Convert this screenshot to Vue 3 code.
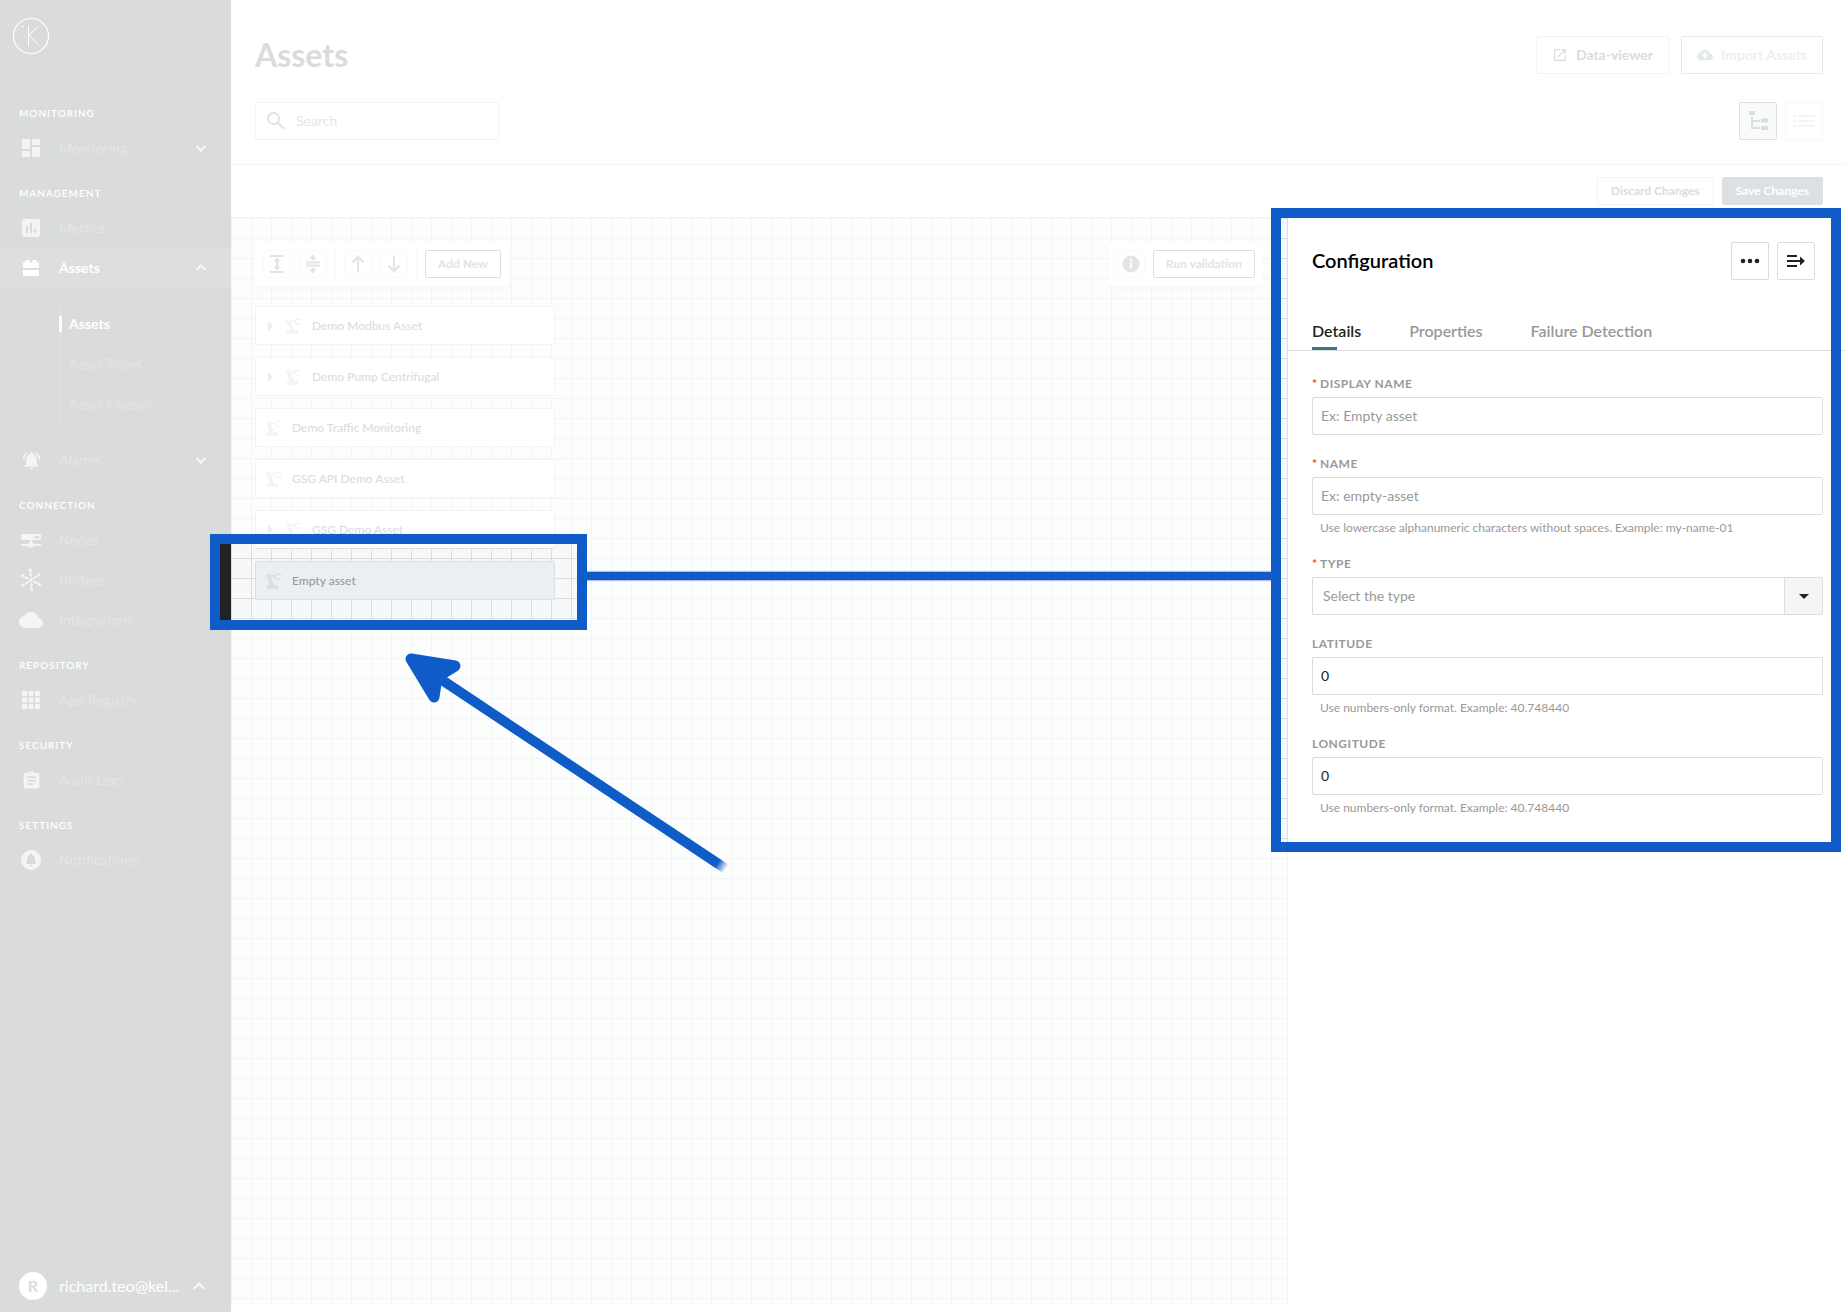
<script setup>
import { ref } from 'vue'

const icons = {
  dashboard: 'M3 13h8V3H3v10zm0 8h8v-6H3v6zm10 0h8V11h-8v10zm0-18v6h8V3h-8z',
  metrics:
    'M19 3H5c-1.1 0-2 .9-2 2v14c0 1.1.9 2 2 2h14c1.1 0 2-.9 2-2V5c0-1.1-.9-2-2-2zM9 17H7v-7h2v7zm4 0h-2V7h2v10zm4 0h-2v-4h2v4z',
  brick: 'M4 12V6.500h2.500V4h4v2.500h3V4h4v2.500H20V12zM4 14h16v5q0 1-1 1H5q-1 0-1-1z',
  alarm:
    'M7.58 4.08L6.15 2.65C3.75 4.48 2.17 7.3 2.03 10.5h2c.15-2.65 1.51-4.97 3.55-6.42zm12.39 6.42h2c-.15-3.2-1.73-6.02-4.12-7.85l-1.42 1.43c2.02 1.45 3.39 3.77 3.54 6.42zM18 11c0-3.07-1.64-5.64-4.5-6.32V4c0-.83-.67-1.5-1.5-1.5s-1.5.67-1.5 1.5v.68C7.63 5.36 6 7.92 6 11v5l-2 2v1h16v-1l-2-2v-5zm-6 11c.14 0 .27-.01.4-.04.65-.14 1.18-.58 1.44-1.18.1-.24.15-.5.15-.78h-4c.01 1.1.9 2 2.01 2z',
  nodes:
    'M3 6h18q1 0 1 1v4q0 1-1 1h-8v2.300q1.500 .4 2 1.700h7v2h-7q-1 1.500-3 1.500T9 18H2v-2h7q.5-1.300 2-1.700V12H3q-1 0-1-1V7q0-1 1-1zM16 8v2.500h4V8z',
  cloud:
    'M19.35 10.04C18.67 6.59 15.64 4 12 4 9.11 4 6.6 5.64 5.35 8.04 2.34 8.36 0 10.91 0 14c0 3.31 2.69 6 6 6h13c2.76 0 5-2.24 5-5 0-2.64-2.05-4.78-4.65-4.96z',
  clipboard:
    'M19 3h-4.18C14.4 1.84 13.3 1 12 1c-1.3 0-2.4.84-2.82 2H5c-1.1 0-2 .9-2 2v14c0 1.1.9 2 2 2h14c1.1 0 2-.9 2-2V5c0-1.1-.9-2-2-2zm-7 0c.55 0 1 .45 1 1s-.45 1-1 1-1-.45-1-1 .45-1 1-1zm2 14H7v-2h7v2zm3-4H7v-2h10v2zm0-4H7V7h10v2z',
  bell:
    'M12 2a10 10 0 1 0 0 20 10 10 0 0 0 0-20zm0 16.5c-.83 0-1.500-.67-1.500-1.500h3c0 .83-.67 1.500-1.500 1.500zm5-2.500H7v-1l1-1v-2.610C8 9.270 9.030 7.470 11 7v-.5c0-.57.43-1 1-1s1 .43 1 1V7c1.970.47 3 2.280 3 4.390V14l1 1v1z',
}

const sections = [
  { title: 'Monitoring', items: [{ label: 'Monitoring', icon: 'dashboard', chevron: 'down' }] },
  {
    title: 'Management',
    items: [
      { label: 'Metrics', icon: 'metrics' },
      {
        label: 'Assets',
        icon: 'brick',
        chevron: 'up',
        active: true,
        children: ['Assets', 'Asset Types', 'Asset Classes'],
      },
      { label: 'Alarms', icon: 'alarm', chevron: 'down', small: true },
    ],
  },
  {
    title: 'Connection',
    items: [
      { label: 'Nodes', icon: 'nodes' },
      { label: 'Bridges', icon: 'bridges' },
      { label: 'Integrations', icon: 'cloud' },
    ],
  },
  { title: 'Repository', items: [{ label: 'App Registry', icon: 'apps' }] },
  { title: 'Security', items: [{ label: 'Audit Logs', icon: 'clipboard', small: true }] },
  { title: 'Settings', items: [{ label: 'Notifications', icon: 'bell' }] },
]

const assets = [
  { name: 'Demo Modbus Asset', parent: true },
  { name: 'Demo Pump Centrifugal', parent: true },
  { name: 'Demo Traffic Monitoring' },
  { name: 'GSG API Demo Asset' },
  { name: 'GSG Demo Asset', parent: true, edge: true },
  { name: 'Empty asset', selected: true },
]

const search = ref('')
const displayName = ref('')
const assetName = ref('')
const type = ref('')
const latitude = ref('0')
const longitude = ref('0')
</script>

<template>
  <div class="app">
    <aside class="sidebar">
      <a class="logo" href="#" aria-label="Home">
        <svg width="38" height="38" viewBox="0 0 38 38" fill="none" stroke="#fff">
          <circle cx="19" cy="19" r="17.5" stroke-width="1.2" />
          <path d="M16.500 9.500v19M26.500 9.500L17 18l10 10.500" stroke-width="1" />
          <circle cx="10.500" cy="9.500" r="1" fill="#fff" stroke="none" />
        </svg>
      </a>
      <nav>
        <section v-for="s in sections" :key="s.title">
          <h2 class="nav-title">{{ s.title }}</h2>
          <template v-for="item in s.items" :key="item.label">
            <a href="#" class="nav-item" :class="{ active: item.active }">
              <span class="nav-icon">
                <svg v-if="item.icon === 'apps'" width="24" height="24" viewBox="0 0 24 24">
                  <template v-for="r in 3" :key="r">
                    <rect v-for="c in 3" :key="c" :x="c * 6.5 - 3.5" :y="r * 6.5 - 3.5" width="5" height="5" rx="1" />
                  </template>
                </svg>
                <svg v-else-if="item.icon === 'bridges'" width="24" height="24" viewBox="0 0 24 24">
                  <g v-for="n in 6" :key="n" :transform="`rotate(${n * 60 - 4} 12 12)`">
                    <path d="M11.500 4h1v8h-1z" />
                    <circle cx="12" cy="2.500" r="1.700" />
                    <circle cx="12" cy="6.800" r="1.400" />
                  </g>
                </svg>
                <svg v-else :width="item.small ? 21 : 24" :height="item.small ? 21 : 24" viewBox="0 0 24 24">
                  <path :d="icons[item.icon]" fill-rule="evenodd" />
                </svg>
              </span>
              <span class="nav-label">{{ item.label }}</span>
              <svg v-if="item.chevron" class="chevron" width="12" height="12" viewBox="0 0 12 12">
                <path :d="item.chevron === 'up' ? 'M1.500 8L6 3.500 10.500 8' : 'M1.500 4L6 8.500 10.500 4'" />
              </svg>
            </a>
            <ul v-if="item.children" class="submenu">
              <li v-for="(c, i) in item.children" :key="c">
                <a href="#" class="sub-item" :class="{ current: i === 0 }">{{ c }}</a>
              </li>
            </ul>
          </template>
        </section>
      </nav>
      <button class="user" type="button">
        <span class="avatar">R</span>
        <span class="user-name">richard.teo@kel...</span>
        <svg class="chevron" width="14" height="12" viewBox="0 0 14 12"><path d="M1.500 9L7 3.500 12.500 9" /></svg>
      </button>
    </aside>

    <main class="main">
      <header class="header">
        <div class="bar title-bar">
          <h1>Assets</h1>
          <div class="group">
            <button class="btn large" type="button">
              <svg width="16" height="16" viewBox="0 0 24 24" fill="#dcdcdc">
                <path d="M19 19H5V5h7V3H5a2 2 0 0 0-2 2v14a2 2 0 0 0 2 2h14c1.100 0 2-.9 2-2v-7h-2v7zM14 3v2h3.590l-9.830 9.830 1.410 1.410L19 6.410V10h2V3h-7z" />
              </svg>
              Data-viewer
            </button>
            <button class="btn large import" type="button">
              <svg width="16" height="16" viewBox="0 0 24 24" fill="#e1ebeb">
                <path d="M19.350 10.040C18.670 6.590 15.640 4 12 4 9.110 4 6.600 5.640 5.350 8.040 2.340 8.360 0 10.910 0 14c0 3.310 2.690 6 6 6h13c2.760 0 5-2.240 5-5 0-2.640-2.050-4.780-4.650-4.960zM14 13v4h-4v-4H7l5-5 5 5h-3z" />
              </svg>
              Import Assets
            </button>
          </div>
        </div>
        <div class="bar">
          <label class="search">
            <svg width="24" height="24" viewBox="0 0 24 24" fill="#e3e3e3">
              <path d="M15.500 14h-.79l-.28-.27A6.470 6.470 0 0 0 16 9.500 6.500 6.500 0 1 0 9.500 16c1.610 0 3.090-.59 4.230-1.570l.27.28v.79l5 4.990L20.490 19l-4.990-5zm-6 0C7.010 14 5 11.990 5 9.500S7.010 5 9.500 5 14 7.010 14 9.500 11.990 14 9.500 14z" />
            </svg>
            <input v-model="search" type="text" placeholder="Search" aria-label="Search" />
          </label>
          <div class="group toggles">
            <button class="square on" type="button" aria-label="Tree view">
              <svg width="24" height="24" viewBox="0 0 24 24" fill="#d8dfe1">
                <path d="M3 2h6v4H3zM15 9.500h7v4h-7zM15 17h7v4h-7zM5 7.500h2V11h7v2H7v5h7v2H5z" />
              </svg>
            </button>
            <button class="square" type="button" aria-label="List view">
              <svg width="22" height="14" viewBox="0 0 22 14" fill="#f4f4f4">
                <path d="M0 1h3v2H0zM5 1h17v2H5zM0 6h3v2H0zM5 6h17v2H5zM0 11h3v2H0zM5 11h17v2H5z" />
              </svg>
            </button>
          </div>
        </div>
      </header>

      <div class="actions">
        <button class="btn discard" type="button">Discard Changes</button>
        <button class="btn save" type="button">Save Changes</button>
      </div>

      <div class="workspace">
        <div class="canvas">
          <div class="lit lit-row"></div>
          <div class="lit lit-edge"></div>
          <div class="toolbars">
            <div class="toolbar">
              <button class="tool" type="button" aria-label="Expand all">
                <svg width="16" height="18" viewBox="0 0 16 18"><path d="M1 1h14M1 17h14M8 4v10M5.500 6.500L8 4l2.500 2.500M5.500 11.500L8 14l2.500-2.500" /></svg>
              </button>
              <button class="tool" type="button" aria-label="Collapse all">
                <svg width="16" height="18" viewBox="0 0 16 18"><path d="M1 7.500h14M1 10.500h14M8 0v4M5.500 2L8 4.500 10.500 2M8 18v-4M5.500 16L8 13.500l2.500 2.500" /></svg>
              </button>
              <span class="divider"></span>
              <button class="tool" type="button" aria-label="Move up">
                <svg width="16" height="18" viewBox="0 0 16 18"><path d="M8 17V2M2.500 7.500L8 2l5.500 5.500" /></svg>
              </button>
              <button class="tool" type="button" aria-label="Move down">
                <svg width="16" height="18" viewBox="0 0 16 18"><path d="M8 1v15M2.500 10.500L8 16l5.500-5.500" /></svg>
              </button>
              <span class="divider"></span>
              <button class="btn outline" type="button">Add New</button>
            </div>
            <div class="toolbar">
              <button class="tool" type="button" aria-label="Information">
                <svg class="solid" width="18" height="18" viewBox="0 0 18 18">
                  <path fill-rule="evenodd" d="M9 .5a8.500 8.500 0 1 0 0 17 8.500 8.500 0 0 0 0-17zM8 4h2v2H8zM8 7.500h2V13H8z" />
                </svg>
              </button>
              <button class="btn outline" type="button">Run validation</button>
            </div>
          </div>
          <ul class="tree">
            <li v-for="a in assets" :key="a.name" class="asset" :class="{ selected: a.selected, edge: a.edge }">
              <svg v-if="a.parent" class="caret" width="5" height="10" viewBox="0 0 5 10"><path d="M0 0l5 5-5 5z" /></svg>
              <svg class="robot" width="16" height="16" viewBox="0 0 16 16">
                <path d="M1.400 4.600L4.800 3.800 8.300 12.300h3q.7 0 .7 1v2.400H.7v-2.400q0-1 1-1H3.600z" />
                <path class="line" d="M4 3h4.500M15.200 2L11.800 1 8.700 2.700v2.200l3.100 1.800L15.200 5.600" />
                <circle class="line" cx="2.400" cy="3" r="1.600" />
              </svg>
              <span>{{ a.name }}</span>
            </li>
          </ul>
        </div>

        <section class="panel">
          <div class="panel-head">
            <h2>Configuration</h2>
            <div class="group">
              <button class="square dark" type="button" aria-label="More options">
                <svg width="20" height="6" viewBox="0 0 20 6"><circle cx="3" cy="3" r="2.300" /><circle cx="10" cy="3" r="2.300" /><circle cx="17" cy="3" r="2.300" /></svg>
              </button>
              <button class="square dark" type="button" aria-label="Collapse panel">
                <svg width="18" height="14" viewBox="0 0 18 14"><path d="M0 1h10v2H0zM0 6h13V2.500L18 7l-5 4.500V8H0zM0 11h10v2H0z" /></svg>
              </button>
            </div>
          </div>
          <div class="tabs" role="tablist">
            <button class="tab current" type="button" role="tab">Details</button>
            <button class="tab" type="button" role="tab">Properties</button>
            <button class="tab" type="button" role="tab">Failure Detection</button>
          </div>
          <form class="form">
            <div class="field">
              <label for="display-name"><b>*</b>Display name</label>
              <input id="display-name" v-model="displayName" type="text" placeholder="Ex: Empty asset" />
            </div>
            <div class="field">
              <label for="name"><b>*</b>Name</label>
              <input id="name" v-model="assetName" type="text" placeholder="Ex: empty-asset" />
              <p>Use lowercase alphanumeric characters without spaces. Example: my-name-01</p>
            </div>
            <div class="field">
              <label for="type"><b>*</b>Type</label>
              <div class="select">
                <select id="type" v-model="type">
                  <option value="">Select the type</option>
                </select>
                <span class="select-arrow">
                  <svg width="10" height="5" viewBox="0 0 10 5"><path d="M0 0h10L5 5z" /></svg>
                </span>
              </div>
            </div>
            <div class="field">
              <label for="latitude">Latitude</label>
              <input id="latitude" v-model="latitude" type="text" />
              <p>Use numbers-only format. Example: 40.748440</p>
            </div>
            <div class="field">
              <label for="longitude">Longitude</label>
              <input id="longitude" v-model="longitude" type="text" />
              <p>Use numbers-only format. Example: 40.748440</p>
            </div>
          </form>
        </section>

        <div class="connector"></div>
        <div class="frame frame-row"></div>
        <div class="frame frame-panel"></div>
        <svg class="pointer" width="330" height="230" viewBox="400 648 330 230">
          <defs>
            <linearGradient id="tail" gradientUnits="userSpaceOnUse" x1="436" y1="676" x2="726" y2="869">
              <stop offset=".97" stop-color="#0f5bc8" />
              <stop offset="1" stop-color="#0f5bc8" stop-opacity="0" />
            </linearGradient>
          </defs>
          <path d="M411 659l44 7-18 11-3 20z" fill="#0f5bc8" stroke="#0f5bc8" stroke-width="11" stroke-linejoin="round" />
          <path d="M436 676L726 869" stroke="url(#tail)" stroke-width="10" />
        </svg>
      </div>
    </main>
  </div>
</template>

<style>
body {
  margin: 0;
  background: #fff;
}
</style>

<style scoped>
* {
  box-sizing: border-box;
}
.app {
  display: flex;
  min-height: 100vh;
  font: 14px/20px Lato, 'Liberation Sans', sans-serif;
  color: #212322;
}
h1,
h2,
p,
ul {
  margin: 0;
  padding: 0;
  list-style: none;
}
a {
  text-decoration: none;
}
button,
input,
select {
  font: inherit;
  color: inherit;
}
button {
  display: flex;
  align-items: center;
  justify-content: center;
  padding: 0;
  border: 0;
  background: none;
}

/* Sidebar */
.sidebar {
  display: flex;
  flex: none;
  flex-direction: column;
  width: 231px;
  background: #dadcdb;
}
.logo {
  display: flex;
  height: 88px;
  padding: 17px 12px;
}
.nav-title {
  display: flex;
  align-items: center;
  height: 40px;
  padding: 10px 19px 0;
  font-size: 10px;
  font-weight: 600;
  letter-spacing: 1px;
  text-transform: uppercase;
  color: #fff;
}
.nav-item {
  display: flex;
  align-items: center;
  height: 40px;
  padding: 0 24px 0 19px;
  color: #e4e5e5;
}
.nav-item.active {
  background: #dedede;
  color: #fff;
  font-weight: 700;
}
.nav-icon {
  display: flex;
  align-items: center;
  justify-content: center;
  width: 24px;
  margin-right: 16px;
  fill: #f4f4f4;
}
.active .nav-icon {
  fill: #fff;
}
.nav-label {
  flex: 1;
}
.chevron {
  fill: none;
  stroke: #f8f8f8;
  stroke-width: 2;
}
.submenu {
  padding: 16px 0 16px 59px;
  background: #dbdbdb;
}
.submenu li {
  display: flex;
  align-items: center;
  height: 40px;
  border-left: 3px solid #dedede;
}
.sub-item {
  padding-left: 7px;
  color: #e4e4e4;
}
.sub-item.current {
  margin-left: -3px;
  border-left: 3px solid #fff;
  line-height: 16px;
  font-weight: 700;
  color: #fff;
}
.user {
  height: 52px;
  margin-top: auto;
  padding: 0 25px 0 19px;
  font-size: 16px;
  color: #fff;
}
.avatar {
  width: 28px;
  margin-right: 12px;
  border-radius: 50%;
  background: #fff;
  line-height: 28px;
  font-weight: 700;
  color: #dadcdb;
}
.user-name {
  flex: 1;
  text-align: left;
}

/* Header */
.main {
  display: flex;
  flex: 1;
  flex-direction: column;
  min-width: 0;
}
.header {
  display: grid;
  gap: 28px;
  padding: 36px 22px 24px 24px;
  border-bottom: 1px solid #f4f4f4;
}
.bar {
  display: flex;
  align-items: center;
  justify-content: space-between;
  height: 38px;
}
h1 {
  font-size: 32px;
  line-height: 38px;
  font-weight: 700;
  color: #dadcdb;
}
.group {
  display: flex;
  gap: 12px;
}
.group.toggles,
.panel-head .group {
  gap: 8px;
}
.btn {
  height: 28px;
  padding: 0 12px;
  border: 1px solid #f3f3f3;
  border-radius: 2px;
  font-size: 12px;
  font-weight: 700;
  color: #dcdcdc;
  white-space: nowrap;
}
.btn.large {
  gap: 8px;
  height: 38px;
  padding: 0 15px;
  font-size: 14px;
}
.btn.import {
  border-color: #e4eaea;
  color: #ecf0f1;
}
.actions .btn {
  padding: 0 13px;
}
.btn.save {
  border-color: #dbe1e3;
  background: #dbe1e3;
  color: #fff;
}
.btn.outline {
  border-color: #dae0e2;
  color: #dde5e8;
}
.search {
  display: flex;
  align-items: center;
  width: 244px;
  height: 38px;
  padding: 0 8px;
  border: 1px solid #f3f3f3;
  border-radius: 2px;
}
.search input {
  min-width: 0;
  flex: 1;
  padding: 0 8px;
  border: 0;
  outline: 0;
  background: none;
}
.search input::placeholder {
  color: #e6e6e6;
}
.square {
  width: 38px;
  height: 38px;
  border: 1px solid #f6f6f6;
  border-radius: 2px;
}
.square.on {
  border-color: #dae0e2;
  background: #f9fbfa;
}
.square.dark {
  border-color: #dcdcdc;
  fill: #212322;
}
.actions {
  display: flex;
  justify-content: flex-end;
  gap: 8px;
  padding: 12px 22px;
  border-bottom: 1px solid #f3f3f3;
}

/* Canvas */
.workspace {
  position: relative;
  display: flex;
  flex: 1;
  margin-bottom: 7px;
}
.canvas,
.lit {
  background: linear-gradient(#f3f4f4 1px, transparent 1px) 0 0 / 20px 20px,
    linear-gradient(90deg, #f3f4f4 1px, transparent 1px) 0 0 / 20px 20px, #fcfefd;
}
.canvas {
  position: relative;
  flex: 1;
  min-width: 0;
  padding: 24px;
}
.lit {
  position: absolute;
  background-image: linear-gradient(#dcdcdd 1px, transparent 1px),
    linear-gradient(90deg, #dcdcdd 1px, transparent 1px);
  background-color: #f7f8fa;
}
.lit-row {
  top: 320px;
  left: 0;
  width: 350px;
  height: 90px;
}
.lit-edge {
  top: 0;
  right: 0;
  width: 10px;
  height: 630px;
  background-image: linear-gradient(#dcdcdd 1px, transparent 1px);
}
.toolbars {
  position: relative;
  display: flex;
  justify-content: space-between;
  margin-bottom: 20px;
}
.toolbar {
  display: flex;
  gap: 8px;
  padding: 8px;
  border-radius: 4px;
  background: #fff;
  box-shadow: 0 4px 10px rgba(0, 0, 0, 0.02);
}
.tool {
  width: 28px;
  height: 28px;
  border: 1px solid #fafafa;
  border-radius: 2px;
}
.tool svg {
  fill: none;
  stroke: #e4e4e4;
  stroke-width: 2;
}
.tool svg.solid {
  fill: #e4e4e4;
  stroke: none;
}
.divider {
  width: 1px;
  background: #f8f8f8;
}
.tree {
  position: relative;
  display: grid;
  gap: 12px;
  width: 300px;
}
.asset {
  display: flex;
  align-items: center;
  height: 39px;
  padding: 0 10px;
  border: 1px solid #f4f4f4;
  border-radius: 2px;
  background: #fff;
  font-size: 12px;
  font-weight: 500;
  color: #dcdcdc;
}
.asset.edge {
  border-bottom-color: #dcdcdc;
}
.asset.selected {
  border-color: #dcdedf;
  background: #eaf0f2;
  color: #999;
}
.caret {
  margin: 0 13px 0 2px;
  fill: #ececec;
}
.robot {
  margin-right: 10px;
  color: #f4f4f4;
  fill: currentColor;
}
.selected .robot {
  color: #dcdcdc;
}
.robot .line {
  fill: none;
  stroke: currentColor;
  stroke-width: 1.4;
}

/* Configuration panel */
.panel {
  flex: none;
  width: 558px;
  border-left: 1px solid #f3f3f3;
  border-image: linear-gradient(#dcdcdc 630px, #f3f3f3 630px) 1;
  background: #fff;
}
.panel-head {
  display: flex;
  align-items: center;
  justify-content: space-between;
  padding: 24px 30px 24px 24px;
}
.panel-head h2 {
  padding-bottom: 2px;
  font-size: 20px;
  font-weight: 600;
  color: #000;
}
.tabs {
  display: flex;
  gap: 48px;
  height: 47px;
  padding: 0 24px;
  border-bottom: 1px solid #dcdcdc;
}
.tab {
  position: relative;
  padding-top: 8px;
  font-size: 16px;
  font-weight: 600;
  color: #999;
}
.tab.current {
  color: #212322;
}
.tab.current::after {
  content: '';
  position: absolute;
  bottom: 0;
  left: 0;
  width: 25px;
  height: 3px;
  background: #3f7580;
}
.form {
  display: grid;
  gap: 16px;
  padding: 23px 22px 23px 24px;
}
.field label {
  display: flex;
  margin-bottom: 3px;
  font-size: 12px;
  font-weight: 700;
  letter-spacing: 0.5px;
  text-transform: uppercase;
  color: #999;
}
.field label b {
  width: 8px;
  color: #f0532d;
}
.field input,
.select {
  display: flex;
  width: 100%;
  height: 38px;
  margin-bottom: 3px;
  border: 1px solid #dcdcdc;
  border-radius: 2px;
  background: #fff;
}
.field input {
  padding: 0 8px 2px;
}
.field input::placeholder {
  color: #999;
}
.field p {
  padding-left: 8px;
  font-size: 12px;
  color: #999;
}
.select {
  position: relative;
}
.select select {
  flex: 1;
  padding: 0 48px 0 10px;
  border: 0;
  background: none;
  appearance: none;
  color: #999;
}
.select-arrow {
  position: absolute;
  top: 0;
  right: 0;
  bottom: 0;
  display: flex;
  align-items: center;
  justify-content: center;
  width: 38px;
  border-left: 1px solid #dcdcdc;
  background: #f5f5f5;
  fill: #212322;
  pointer-events: none;
}

/* Annotations drawn over the page */
.frame,
.connector,
.pointer {
  position: absolute;
  pointer-events: none;
}
.frame {
  border: 10px solid #0f5bc8;
}
.frame-row {
  top: 316px;
  left: -21px;
  width: 377px;
  height: 96px;
  background: linear-gradient(#212322, #212322) 0 0 / 11px 100% no-repeat;
}
.frame-panel {
  top: -10px;
  right: 4px;
  width: 570px;
  height: 644px;
}
.connector {
  top: 354px;
  left: 356px;
  right: 574px;
  height: 8px;
  background: #0f5bc8;
  box-shadow: 0 0 1px 1px rgba(90, 90, 200, 0.4);
}
.pointer {
  top: 430px;
  left: 169px;
  fill: none;
}
</style>
